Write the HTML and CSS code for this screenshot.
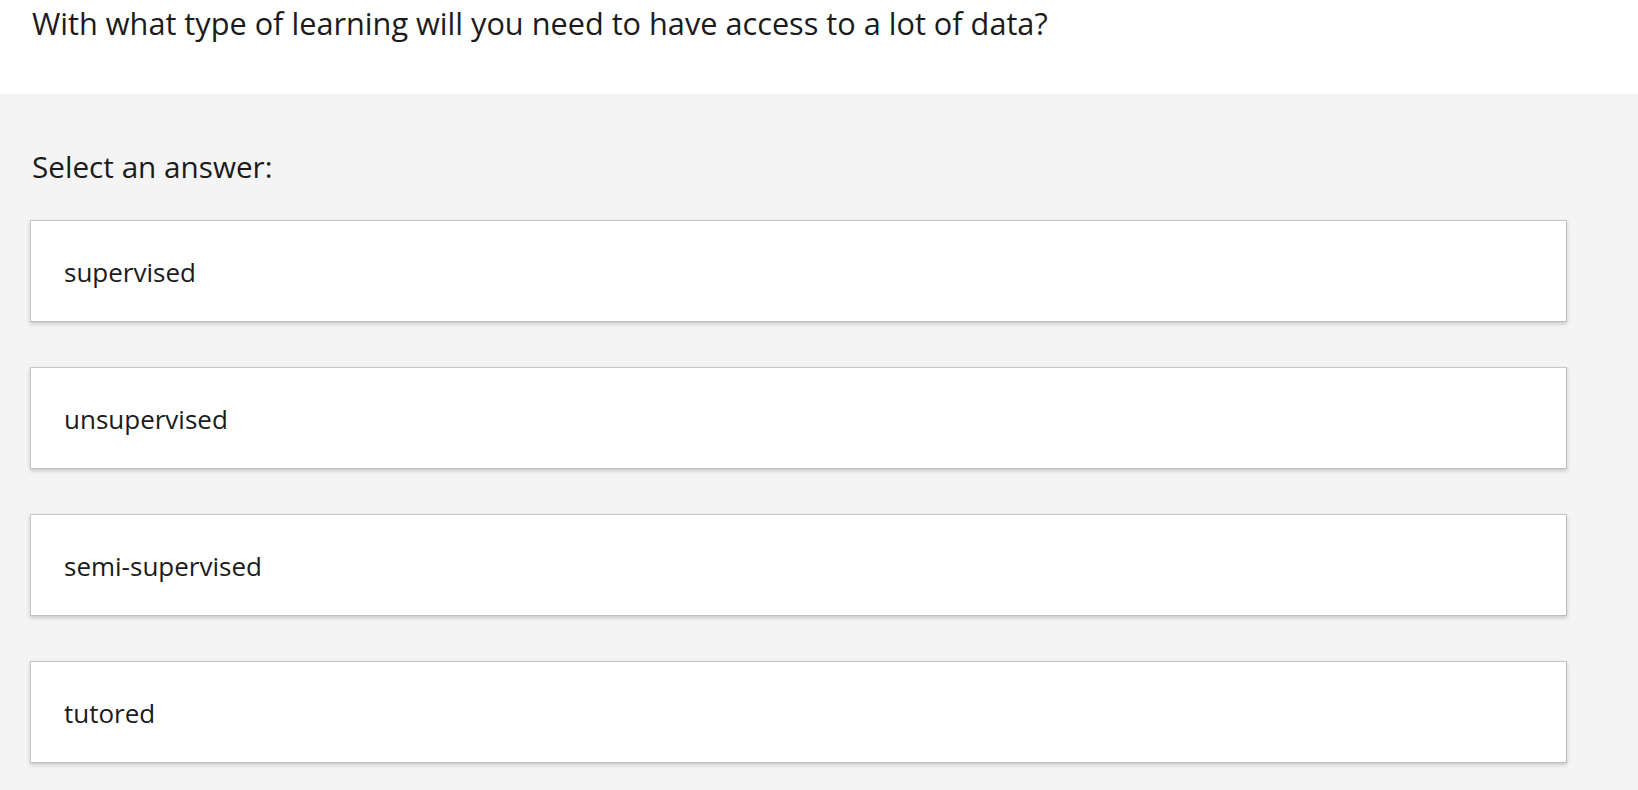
FILE: index.html
```html
<!DOCTYPE html>
<html lang="en">
<head>
<meta charset="utf-8">
<title>Quiz</title>
<link rel="stylesheet" href="styles.css">
</head>
<body>
<header class="question">
  <h1 class="question-text">With what type of learning will you need to have access to a lot of data?</h1>
</header>
<main class="answers">
  <p class="prompt">Select an answer:</p>
  <ul class="options">
    <li class="option">supervised</li>
    <li class="option">unsupervised</li>
    <li class="option">semi-supervised</li>
    <li class="option">tutored</li>
  </ul>
</main>
</body>
</html>
```
FILE: styles.css
```css
html, body {
  margin: 0;
  padding: 0;
  height: 100%;
}
body {
  font-family: "Open Sans", "Noto Sans", sans-serif;
  color: #1b1b1b;
  background: #f4f4f4;
}
.question {
  background: #ffffff;
  height: 94px;
  padding: 0 32px;
  box-sizing: border-box;
}
.question-text {
  margin: 0;
  padding-top: 2px;
  font-size: 30.7px;
  font-weight: 400;
  line-height: 42px;
}
.answers {
  padding: 0 71px 0 30px;
}
.prompt {
  margin: 0;
  padding-top: 52px;
  font-size: 29.7px;
  line-height: 42px;
  padding-left: 2px;
}
.options {
  list-style: none;
  margin: 32px 0 0;
  padding: 0;
  display: flex;
  flex-direction: column;
  gap: 45px;
}
.option {
  background: #ffffff;
  border: 1px solid #c6c6c6;
  border-right-color: #bdbdbd;
  border-bottom-color: #bdbdbd;
  box-shadow: 0 2px 4px rgba(0, 0, 0, 0.18);
  height: 100px;
  box-sizing: content-box;
  display: flex;
  align-items: center;
  padding-left: 33px;
  padding-top: 2px;
  height: 98px;
  font-size: 26px;
}
```
